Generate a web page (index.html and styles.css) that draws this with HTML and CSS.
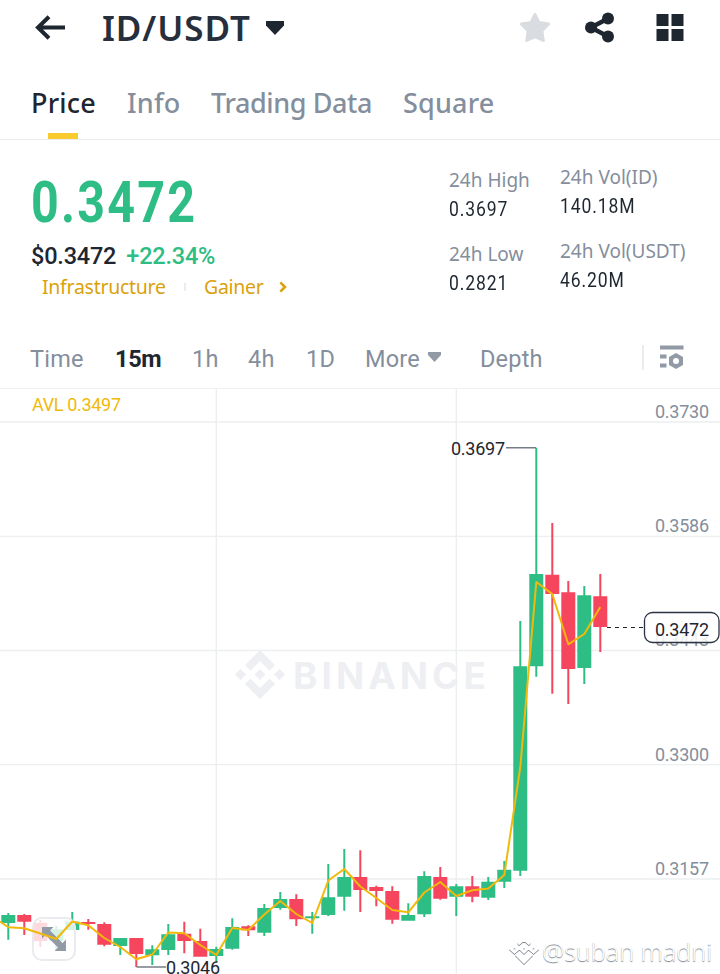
FILE: index.html
```html
<!DOCTYPE html>
<html lang="en">

<head>
    <meta charset="utf-8">
    <title>ID/USDT</title>
    <link rel="stylesheet" href="styles.css">
</head>

<body>
    <header class="topbar">
        <svg class="back" width="32" height="26" viewBox="0 0 32 26">
            <path d="M31 12.500H3M15 1.800L4 12.500L15 23.200" fill="none" stroke="#1e2630" stroke-width="4" />
        </svg>
        <h1 class="pair">ID/USDT</h1>
        <svg class="caret" width="18" height="14" viewBox="0 0 18 14">
            <path d="M0 0H18V4.500L9 14L0 4.500Z" fill="#1e2630" />
        </svg>
        <div class="actions">
            <svg width="30" height="32" viewBox="0 0 30 32">
                <path d="M15 2.500L18.800 10.500L28.500 12L21.800 19L23.300 28.500L15 24.600L6.700 28.500L8.200 19L1.500 12L11.200 10.500Z" fill="#d9dce0" stroke="#d9dce0" stroke-width="3" stroke-linejoin="round" />
            </svg>
            <svg width="30" height="32" viewBox="0 0 30 32">
                <path d="M23 6.500L6 15.500L23 24.500" fill="none" stroke="#1e2630" stroke-width="4.500" />
                <circle cx="6" cy="15.500" r="6" fill="#1e2630" />
                <circle cx="23" cy="6.500" r="6" fill="#1e2630" />
                <circle cx="23" cy="24.500" r="6" fill="#1e2630" />
            </svg>
            <svg width="28" height="28" viewBox="0 0 28 28">
                <path d="M.5 0h12v12h-12zM15.500 0h12v12h-12zM.5 15h12v12h-12zM15.500 15h12v12h-12z" fill="#1e2630" />
            </svg>
        </div>
    </header>

    <nav class="tabs">
        <a class="tab active">Price</a>
        <a class="tab">Info</a>
        <a class="tab tight">Trading Data</a>
        <a class="tab">Square</a>
    </nav>

    <section class="summary">
        <div class="quote">
            <div class="last-price">0.3472</div>
            <div class="change-row">
                <span class="fiat">$0.3472</span>
                <span class="change">+22.34%</span>
            </div>
            <div class="tags">
                <span class="tag-infra">Infrastructure</span>
                <span class="tag-line"></span>
                <span class="tag-gainer">Gainer</span>
                <svg width="8" height="12" viewBox="0 0 8 12">
                    <path d="M1.300 1.300L6 6L1.300 10.700" fill="none" stroke="#d9a20c" stroke-width="2.600" />
                </svg>
            </div>
        </div>
        <dl class="stats">
            <dt>24h High</dt>
            <dd>0.3697</dd>
            <dt>24h Low</dt>
            <dd>0.2821</dd>
        </dl>
        <dl class="stats volume">
            <dt>24h Vol(ID)</dt>
            <dd>140.18M</dd>
            <dt>24h Vol(USDT)</dt>
            <dd>46.20M</dd>
        </dl>
    </section>

    <nav class="intervals">
        <a>Time</a>
        <a class="active">15m</a>
        <a>1h</a>
        <a>4h</a>
        <a>1D</a>
        <a class="more">More
            <svg width="13" height="10" viewBox="0 0 13 10">
                <path d="M0 0H13V3L6.500 10L0 3Z" fill="#929aa5" />
            </svg>
        </a>
        <a>Depth</a>
        <div class="settings">
            <svg width="25" height="25" viewBox="0 0 25 25">
                <path d="M0 .5h23.500v4H0zM0 9.500h6.500v4H0zM0 18.500h6.500v4H0z" fill="#929aa5" />
                <path d="M16 8L23 12V20L16 24L9 20V12ZM16 13A3 3 0 1 0 16 19A3 3 0 1 0 16 13Z" fill="#929aa5" fill-rule="evenodd" />
            </svg>
        </div>
    </nav>

    <main class="chart">
        <svg width="720" height="586" viewBox="0 388 720 586">
            <path class="grid" d="M0 388H720M0 422H720M0 536.300H720M0 650.500H720M0 764.700H720M0 879H720M216.300 388V974M456.300 388V974" />

            <g class="brand">
                <path d="M260 650L275 665L269.500 670.500L260 661L250.500 670.500L245 665ZM260 699L275 684L269.500 678.500L260 688L250.500 678.500L245 684ZM260 669L265.500 674.500L260 680L254.500 674.500ZM240.500 669L246 674.500L240.500 680L235 674.500ZM279.500 669L285 674.500L279.500 680L274 674.500Z" />
                <text x="293" y="688.500" textLength="193">BINANCE</text>
            </g>

            <g id="candles"></g>

            <g class="expand">
                <rect x="33" y="918" width="42" height="42" rx="9" />
                <path d="M42 927H53.500L50 930.500L62.500 943L66 939.500V951H54.500L58 947.500L45.500 935L42 938.500Z" />
            </g>

            <polyline id="avl" />

            <text class="avl-label" x="32" y="411" textLength="89">AVL 0.3497</text>

            <g class="axis">
                <text x="655" y="418" textLength="54">0.3730</text>
                <text x="655" y="532" textLength="54">0.3586</text>
                <text x="655" y="646" textLength="54">0.3443</text>
                <text x="655" y="761" textLength="54">0.3300</text>
                <text x="655" y="875" textLength="54">0.3157</text>
            </g>

            <path class="marker" d="M506 447.800H536M136.500 967H166" />
            <text class="mark-text" x="451" y="455" textLength="54">0.3697</text>
            <text class="mark-text" x="166" y="973.500" textLength="54">0.3046</text>

            <path class="last-line" d="M607 627.500H644" />
            <rect class="last-box" x="644.500" y="612.500" width="74.500" height="30" rx="8" />
            <text class="mark-text" x="655" y="636" textLength="54">0.3472</text>
        </svg>
        <div class="author">
            <svg width="30" height="26" viewBox="0 0 30 26">
                <path d="M9 6L15 1L21 6M2 11L5.500 8L9 11L5.500 14ZM21 11L24.500 8L28 11L24.500 14ZM12 11L15 8L18 11L15 14ZM7 16L15 24L23 16" fill="none" stroke="#fff" stroke-width="3" />
            </svg>
            <span>@suban madni</span>
        </div>
    </main>

    <script>
        // high, body top, body bottom, low, up
        var candles = [
            [913, 915, 923, 939.7, 1], [914, 915, 921.7, 935, 0],
            [920, 922.7, 941, 947, 0], [926, 929.3, 941, 951, 1],
            [912, 921.7, 930, 930, 1], [919, 922, 924, 929.7, 0],
            [922.3, 924, 944.7, 946.3, 0], [938, 938, 946, 955, 1],
            [938, 938, 954, 967, 0], [945.3, 949.3, 955.3, 965, 1],
            [924, 934.3, 950, 955, 1], [921.7, 933.7, 941, 953.3, 0],
            [928.7, 941, 956.7, 956.7, 0], [946.7, 949, 956, 961, 1],
            [918.3, 927, 948.7, 949.7, 1], [925.3, 926.3, 930.3, 936, 0],
            [904, 908, 932.7, 936, 1], [892, 899, 908, 909.7, 1],
            [894.3, 899, 919.3, 926, 0], [912, 916.3, 918.3, 933.7, 1],
            [864, 897.3, 915, 916, 1], [849, 877, 896.7, 910.7, 1],
            [850.3, 877, 890, 912, 0], [885.7, 887, 891, 906.3, 0],
            [886.3, 891, 919.7, 923.7, 0], [903.3, 915, 920.7, 920.7, 1],
            [871.3, 876, 914.3, 917, 1], [867, 877, 898.7, 899.7, 0],
            [884, 886.3, 896.7, 916, 1], [876, 886.3, 896.7, 902.3, 0],
            [877, 881.7, 897.7, 900, 1], [861, 869.7, 881.7, 888, 1],
            [621, 666.3, 870.7, 876, 1], [447.7, 574, 666.3, 676.7, 1],
            [523, 574.7, 594, 693.7, 0], [581, 592.3, 669, 704, 0],
            [586, 595.3, 668, 684, 1], [574, 596.3, 627, 652, 0]
        ];
        var avl = [927.3, 928.3, 933.5, 939, 921.5, 925.3, 938, 947, 959.3, 954.5,
            932.5, 933.3, 945, 955, 928, 930, 914.5, 901, 914, 923, 880.5, 869,
            886.5, 898, 910, 912.3, 892.5, 882, 896, 890.3, 888.5, 875, 767,
            582, 594, 644.3, 634, 607];

        var shapes = "";
        var points = "0,921.5";
        for (var i = 0; i < candles.length; i++) {
            var c = candles[i];
            var x = 8.3 + i * 16;
            shapes += '<path class="' + (c[4] ? "up" : "down") + '" d="M' + (x - 1) + ' ' + c[0] + 'h2V' + c[3] + 'h-2z' +
                'M' + (x - 7) + ' ' + c[1] + 'h14V' + c[2] + 'h-14z"/>';
            points += " " + x + "," + avl[i];
        }
        document.getElementById("candles").innerHTML = shapes;
        document.getElementById("avl").setAttribute("points", points);
    </script>
</body>

</html>
```
FILE: styles.css
```css
body {
    margin: 0;
    width: 720px;
    height: 974px;
    overflow: hidden;
    background: #fff;
    color: #1e2630;
    font-family: "Noto Sans", sans-serif;
}

svg {
    display: block;
    flex: none;
}

.topbar {
    display: flex;
    align-items: center;
    height: 55px;
    padding: 0 36px 0 34px;
}

.pair {
    margin: 0 16px 0 36px;
    width: 147px;
    font-size: 35px;
    font-weight: 600;
    line-height: 55px;
    letter-spacing: 0.9px;
    color: #272f3d;
    white-space: nowrap;
}

.caret {
    margin-left: 1px;
}

.actions {
    display: flex;
    align-items: center;
    margin-left: auto;
}

.actions svg:nth-child(2) {
    margin: 0 41px 0 35px;
}

.tabs {
    display: grid;
    grid-template-columns: 96px 84px 192px 1fr;
    height: 84px;
    padding-left: 31px;
    border-bottom: 1px solid #eaecef;
}

.tab {
    position: relative;
    font-size: 27px;
    font-weight: 500;
    line-height: 95px;
    height: 84px;
    letter-spacing: 0.2px;
    color: #848e9c;
    white-space: nowrap;
}

.tab.tight {
    letter-spacing: -0.4px;
}

.tab.active {
    color: #1e2630;
}

.tab.active::after {
    content: "";
    position: absolute;
    left: 17px;
    bottom: 0;
    width: 30px;
    height: 6px;
    background: #f8cb2e;
}

.summary {
    display: grid;
    grid-template-columns: 418px 111px 1fr;
    height: 160px;
    padding: 30px 0 0 31px;
}

.last-price {
    width: 300px;
    font: 700 57px/65px Roboto, sans-serif;
    color: #2ebd85;
    letter-spacing: 2.6px;
    transform: scaleX(0.85);
    transform-origin: left;
}

.change-row {
    display: flex;
    gap: 10px;
    font: 500 23.5px/42px Roboto, sans-serif;
    letter-spacing: -0.2px;
}

.change {
    color: #2ebd85;
}

.tags {
    display: flex;
    align-items: center;
    padding-left: 11px;
    font-size: 19.5px;
    line-height: 19px;
    letter-spacing: -0.28px;
    color: #d9a20c;
}

.tag-infra {
    width: 142px;
}

.tag-line {
    width: 2px;
    height: 8px;
    margin-right: 18px;
    background: #eaecef;
}

.tag-gainer {
    width: 75px;
}

.stats {
    margin: -5px 0 0;
    white-space: nowrap;
}

.stats.volume {
    margin-top: -8px;
}

.stats dt {
    font-size: 19px;
    line-height: 30px;
    color: #848e9c;
}

.stats dd {
    margin: 0 0 14px;
    font: 400 19.5px/30px Roboto, sans-serif;
    letter-spacing: 1px;
    transform: scaleX(0.9);
    transform-origin: left;
}

.intervals {
    display: grid;
    grid-template-columns: 85px 77px 56px 58px 59px 115px 162px 1fr;
    height: 58px;
    padding-left: 30px;
    font: 400 23.5px/58px Roboto, sans-serif;
    letter-spacing: 0.2px;
    color: #848e9c;
}

.intervals .active {
    color: #1e2630;
    font-weight: 700;
    letter-spacing: -0.3px;
}

.more {
    display: flex;
    align-items: center;
    gap: 8px;
}

.more svg {
    margin-top: -4px;
}

.settings {
    align-self: center;
    margin-top: -3px;
    padding-left: 16px;
    border-left: 2px solid #eaecef;
}

.chart {
    position: relative;
    height: 586px;
    font-family: Roboto, sans-serif;
}

.grid {
    fill: none;
    stroke: #eceef0;
    stroke-width: 1.3;
}

.brand {
    fill: #eeeff2;
    font: 700 37px Inter, sans-serif;
}

.up {
    fill: #2ebd85;
}

.down {
    fill: #f6465d;
}

#avl {
    fill: none;
    stroke: #f0b90b;
    stroke-width: 2;
    stroke-linejoin: round;
}

.expand rect {
    fill: rgba(255, 255, 255, 0.8);
    stroke: #e9ebef;
    stroke-width: 2;
}

.expand path {
    fill: #929aa5;
}

.axis {
    font-size: 18px;
    fill: #848e9c;
}

.avl-label {
    font-size: 18px;
    fill: #f0b90b;
}

.mark-text {
    font-size: 18px;
    fill: #1e2630;
}

.marker {
    stroke: #767c88;
    stroke-width: 1.5;
}

.last-line {
    stroke: #1e2630;
    stroke-width: 1;
    stroke-dasharray: 4 4;
}

.last-box {
    fill: rgba(255, 255, 255, 0.85);
    stroke: #2b3342;
    stroke-width: 1.3;
}

.author {
    position: absolute;
    right: 8px;
    bottom: 5px;
    display: flex;
    align-items: center;
    gap: 3px;
    font: 300 25px/36px "Noto Sans", sans-serif;
    color: #fff;
    text-shadow: 0 1px 1px #7b828d;
}

.author svg {
    filter: drop-shadow(0 1px 0.6px #7b828d);
}
```
